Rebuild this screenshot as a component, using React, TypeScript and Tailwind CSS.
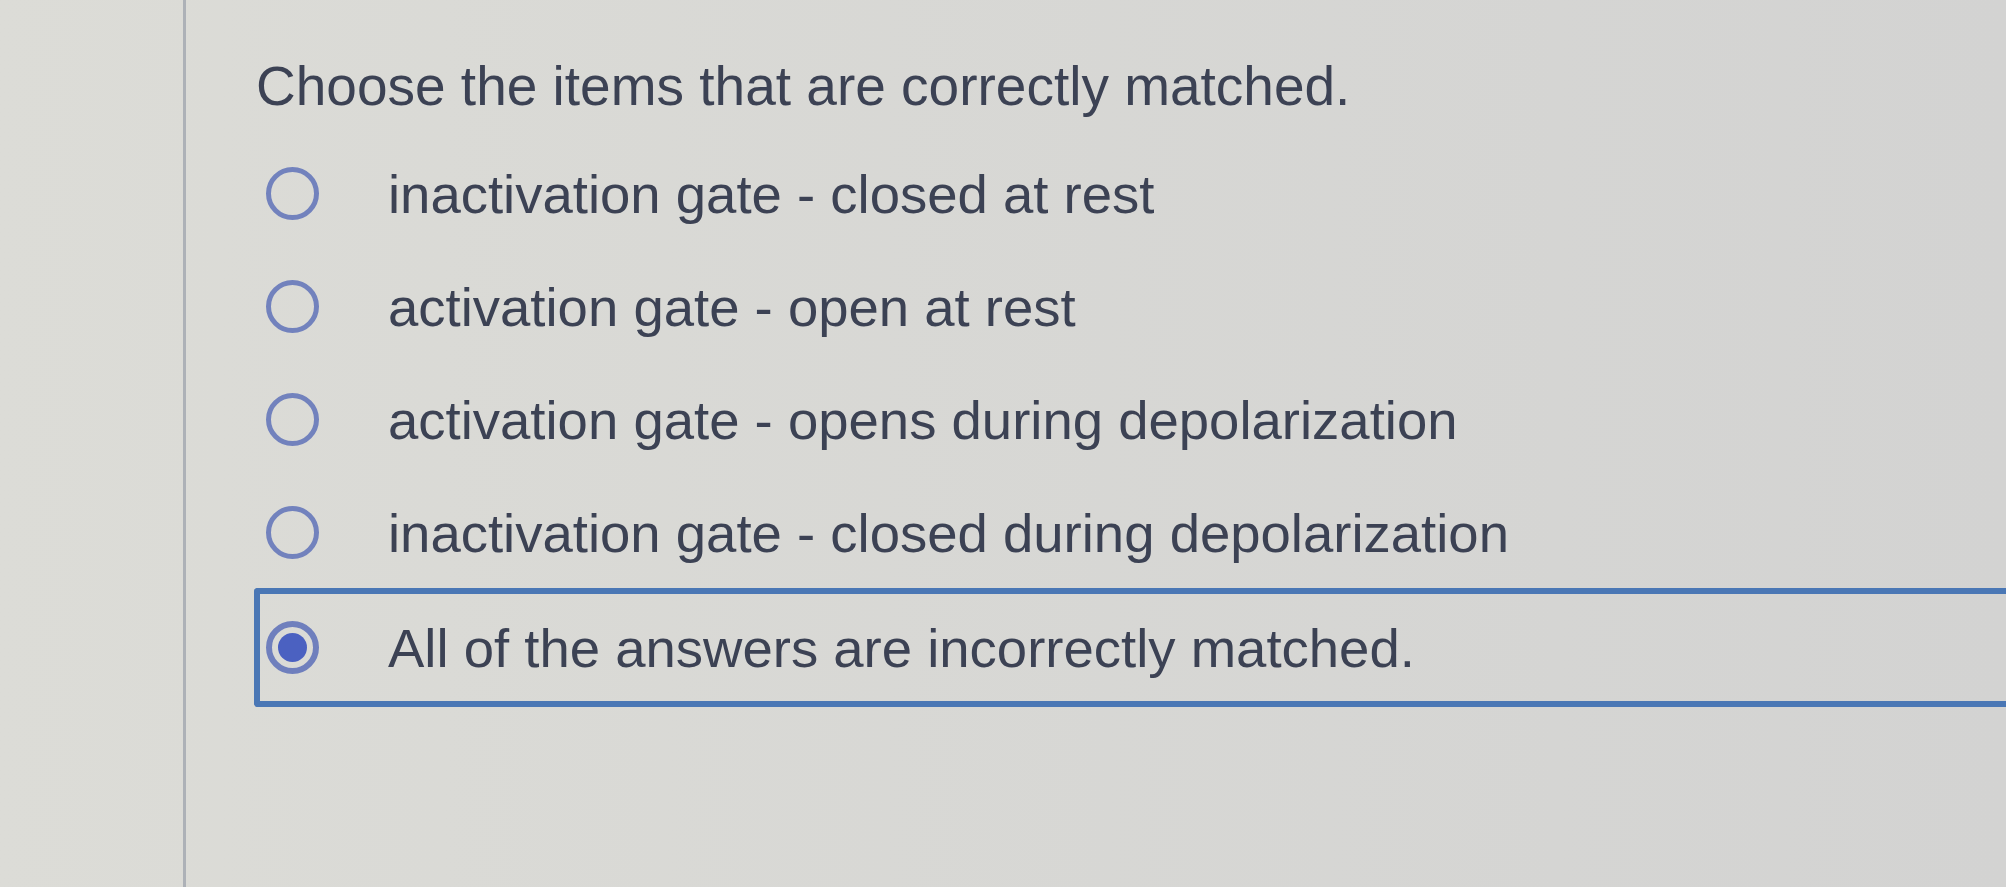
import React from 'react';

const options = [
  'inactivation gate - closed at rest',
  'activation gate - open at rest',
  'activation gate - opens during depolarization',
  'inactivation gate - closed during depolarization',
];

function Radio({ checked }: { checked?: boolean }) {
  if (checked) {
    return (
      <span className="flex h-[53px] w-[53px] shrink-0 items-center justify-center rounded-full border-[6px] border-[#6f7fbd] mb-[3px]">
        <span className="h-[29px] w-[29px] rounded-full bg-[#4b61c1]" />
      </span>
    );
  }
  return <span className="h-[53px] w-[53px] shrink-0 rounded-full border-[5px] border-[#7282bd] mb-[3px]" />;
}

export default function App() {
  return (
    <div
      className="flex h-[887px] w-full overflow-hidden bg-linear-to-r from-[#dcdcd7] to-[#d3d3d2] text-[#3c4254]"
      style={{ fontFamily: '"Liberation Sans", Arial, sans-serif' }}
    >
      {/* left gutter */}
      <div className="w-[186px] shrink-0 border-r-[3px] border-[#adb1b7]" />

      {/* question */}
      <div className="flex-1 pl-[68px] pt-[59px]">
        <h2 className="pl-[2px] text-[55px] leading-[54px] font-normal">
          Choose the items that are correctly matched.
        </h2>

        <div className="mt-[25px]">
          {options.map((opt) => (
            <label key={opt} className="flex h-[113px] items-center gap-[69px] pl-[12px]">
              <Radio />
              <span className="text-[54.5px] leading-[60px]">{opt}</span>
            </label>
          ))}

          <label className="-mt-[2px] flex items-center gap-[69px] rounded-l-[4px] border-[6px] border-r-0 border-[#4a77b5] pt-[25px] pb-[22px] pl-[6px]">
            <Radio checked />
            <span className="text-[54.5px] leading-[60px]">All of the answers are incorrectly matched.</span>
          </label>
        </div>
      </div>
    </div>
  );
}
